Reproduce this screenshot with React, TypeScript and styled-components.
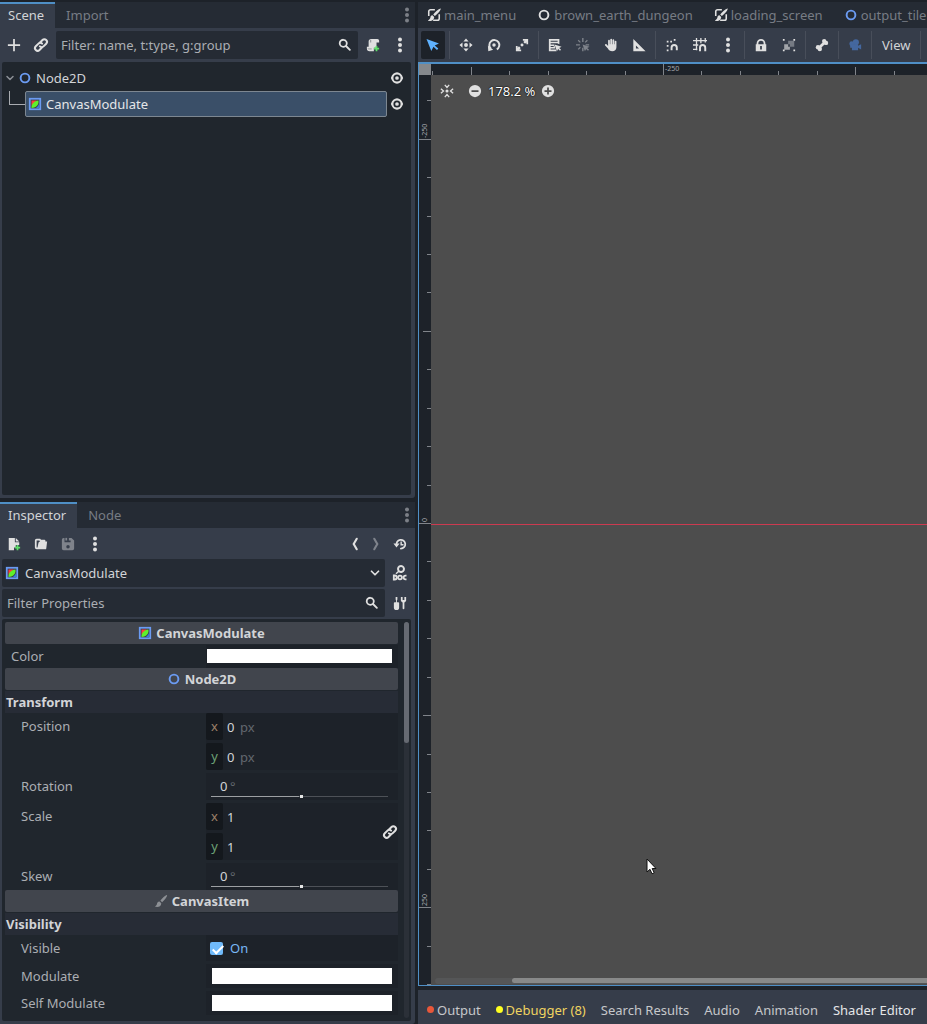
import React from "react";
import styled, { createGlobalStyle, css } from "styled-components";

const c = {
  page: "#1d2229",
  bar: "#252b34",
  base: "#363d4a",
  field: "#252b34",
  tree: "#20262d",
  accent: "#4f8fc6",
  blue: "#70bafa",
  node2d: "#6b9bf2",
  icon: "#e0e0e0",
  text: "#d2d4d7",
  label: "#abaeb3",
  dim: "#777c84",
};

const GlobalStyle = createGlobalStyle`
  * { box-sizing: border-box; }
  body {
    margin: 0;
    background: ${c.page};
    color: ${c.text};
    font: 13px/20px "Noto Sans", sans-serif;
    overflow-x: hidden;
  }
  button, input, select {
    font: inherit;
    color: inherit;
    background: none;
    border: 0;
    padding: 0;
    margin: 0;
    outline: none;
  }
  svg { display: block; flex: none; }
`;

/* ---------- icons ---------- */

const Svg = ({ children, size = 14, color = c.icon }: { children: React.ReactNode; size?: number; color?: string }) => (
  <svg width={size} height={size} viewBox="0 0 16 16" fill={color} aria-hidden="true">
    {children}
  </svg>
);

const AddIcon = () => <Svg><path d="M7 1v6H1v2h6v6h2V9h6V7H9V1z" /></Svg>;

const LinkIcon = () => (
  <Svg size={16}>
    <g fill="none" stroke={c.icon} strokeWidth="2" strokeLinecap="round">
      <path d="M7.300 5.300 9.500 3a2.600 2.600 0 0 1 3.700 3.700L10.500 9.400a2.500 2.500 0 0 1-3.600 0" />
      <path d="M8.700 10.700 6.500 13a2.600 2.600 0 0 1-3.700-3.700L5.500 6.600a2.500 2.500 0 0 1 3.600 0" />
    </g>
  </Svg>
);

const SearchIcon = () => (
  <Svg>
    <path d="M6 1a5 5 0 1 0 2.700 9.200l4.100 4.100a1 1 0 0 0 1.500-1.500l-4.100-4.100A5 5 0 0 0 6 1zm0 2a3 3 0 1 1 0 6 3 3 0 0 1 0-6z" />
  </Svg>
);

const ScriptAddIcon = () => (
  <Svg>
    <path d="M6 1a3 3 0 0 0-3 3v6H1v2a3 3 0 0 0 3 3h5v-4h3V5h3V3a2 2 0 0 0-2-2z" />
    <path d="M6 2a1.500 1.500 0 0 0-1.500 2v1H6z" fill="#9a9da1" />
    <path d="M1.500 11.500h5v2H3z" fill="#b4b6b8" />
    <path d="M11 9h2v2h2v2h-2v2h-2v-2H9v-2h2z" fill="#5fe06a" />
  </Svg>
);

const DotsIcon = ({ color = c.icon }: { color?: string }) => (
  <Svg color={color} size={16}>
    <circle cx="8" cy="2.500" r="2" /><circle cx="8" cy="8" r="2" /><circle cx="8" cy="13.500" r="2" />
  </Svg>
);

const Node2DIcon = ({ color = c.node2d }: { color?: string }) => (
  <Svg><circle cx="8" cy="8" r="5" fill="none" stroke={color} strokeWidth="2.200" /></Svg>
);

const ModulateIcon = () => (
  <Svg>
    <rect x="2" y="2" width="12" height="12" fill="#3a3f4c" stroke="#6b9bf2" strokeWidth="2" />
    <path d="M4 4h6L4 10z" fill="#ff3b3b" />
    <path d="M4 12.500C3.500 8 7 4.500 12 4c.5 4.500-2 8-8 8.500z" fill="#5ff02b" />
    <path d="M12.500 8v4.500H9C10.500 11.500 11.800 10 12.500 8z" fill="#3580e8" />
  </Svg>
);

const EyeIcon = () => (
  <Svg>
    <path
      fillRule="evenodd"
      d="M8 1.500C5 1.500 2.200 4 1 8c1.200 4 4 6.500 7 6.500s5.800-2.500 7-6.500c-1.200-4-4-6.500-7-6.500zm0 2.400a4.100 4.100 0 1 1 0 8.200 4.100 4.100 0 0 1 0-8.200zm0 2a2.100 2.100 0 1 0 0 4.200 2.100 2.100 0 0 0 0-4.200z"
    />
  </Svg>
);

const ChevronIcon = ({ color = c.icon, size = 14 }: { color?: string; size?: number }) => (
  <Svg size={size}><path d="m4 6 4 4 4-4" fill="none" stroke={color} strokeWidth="2" strokeLinecap="round" strokeLinejoin="round" /></Svg>
);

const NewFileIcon = () => (
  <Svg>
    <path d="M2 1v14h6v-3h2V9h4V6H9V1z" /><path d="M10 1v4h4z" />
    <path d="M11 9h2v2h2v2h-2v2h-2v-2H9v-2h2z" fill="#5fe06a" />
  </Svg>
);

const FolderIcon = () => (
  <Svg><path d="M3 2a2 2 0 0 0-2 2v8a2 2 0 0 0 2 2h10a1 1 0 0 0 1-1l1-8H7a2 2 0 0 0-2 2l-1 5H3V4h3l1 1h6V4a1 1 0 0 0-1-1H8L7 2z" /></Svg>
);

const SaveIcon = () => (
  <Svg color="#7f838b">
    <path fillRule="evenodd" d="M3 1a2 2 0 0 0-2 2v10a2 2 0 0 0 2 2h10a2 2 0 0 0 2-2V4l-3-3H9v3h2v2H4V1zm5 8a2 2 0 1 1 0 4 2 2 0 0 1 0-4z" />
    <path d="M5 1h2v3H5z" />
  </Svg>
);

const AngleIcon = ({ flip = false, color = c.icon }: { flip?: boolean; color?: string }) => (
  <Svg>
    <path d={flip ? "m6 2 3.500 6L6 14" : "M10 2 6.500 8l3.500 6"} fill="none" stroke={color} strokeWidth="2.400" strokeLinecap="round" />
  </Svg>
);

const HistoryIcon = () => (
  <Svg>
    <path d="M4.200 9.500A5 5 0 1 1 9 13.200" fill="none" stroke={c.icon} strokeWidth="2" strokeLinecap="round" />
    <path d="M.5 7.500h7L4 12z" /><path d="M8.500 5h1.600v3H12v1.600H8.500z" />
  </Svg>
);

const DocIcon = () => (
  <Svg size={16}>
    <path fillRule="evenodd" d="M9 0a4 4 0 0 0-3.300 6.200L3.500 8.300l1 1 2.200-2A4 4 0 1 0 9 0zm0 2a2 2 0 1 1 0 4 2 2 0 0 1 0-4z" />
    <g fill="none" stroke={c.icon} strokeWidth="1.800">
      <path d="M1.800 10.500v4h1a2 2 0 0 0 0-4z" /><circle cx="8" cy="12.500" r="1.900" /><path d="M14.500 10.600h-1a1.900 1.900 0 0 0 0 3.800h1" />
    </g>
  </Svg>
);

const ToolsIcon = () => (
  <Svg>
    <path d="M3 1h2v3l-.5 1v2H6a1 1 0 0 1 1 1v5a3 3 0 0 1-6 0V8a1 1 0 0 1 1-1h1.500V5L3 4z" />
    <path d="M9 1v4.500a3 3 0 0 0 2 1.800V14a1 1 0 0 0 2 0V7.300a3 3 0 0 0 2-1.800V1h-2v3.500h-2V1z" />
  </Svg>
);

const BrushIcon = () => (
  <Svg color="#8d9095">
    <path d="M14.600 1.200c-2 .6-5 3.500-7.300 6.300l2 2c2.700-2.600 5.300-5.600 5.700-7.700.1-.4-.1-.7-.4-.6z" />
    <path d="M6.300 8.500c-2.300 0-2.800 1.800-3.100 3.500-.2 1-1 1.600-2.200 2.400 3 1 7.300.4 7.300-3.900z" />
  </Svg>
);

const ControlIcon = () => (
  <Svg>
    <path d="M9 2H4a2 2 0 0 0-2 2v5M14 7v5a2 2 0 0 1-2 2H7" fill="none" stroke={c.icon} strokeWidth="1.800" />
    <path d="M15.300.5c-3 1-6.200 4.200-8.200 6.800l1.900 1.900c2.600-2 5.900-5.200 6.700-8 .1-.6 0-.8-.4-.7z" />
    <path d="M6.300 8.300c-1.900 0-2.200 1.500-2.500 2.900-.1.900-.9 1.800-2.800 3.500 3 .8 7.200-.5 7.200-4.500z" />
  </Svg>
);

const SelectIcon = () => <Svg color="#5fb2ff" size={16}><path d="m1.500 2 4.800 12 2.200-4.200L12 13l1.300-1.400-3.600-3 4.300-2z" /></Svg>;

const MoveIcon = () => (
  <Svg><path d="m8 .5 3 3.500H5zM8 15.500 5 12h6zM.5 8 4 5v6zM15.500 8 12 11V5z" /><circle cx="8" cy="8" r="2.200" /></Svg>
);

const RotateIcon = () => (
  <Svg>
    <path d="M4.500 12.200a5.700 5.700 0 1 1 6.700.8" fill="none" stroke={c.icon} strokeWidth="2.200" />
    <path d="M1 8.500 1.500 15 7 13.500z" /><circle cx="8" cy="8" r="2" />
  </Svg>
);

const ScaleIcon = () => (
  <Svg><path d="M9 1h6v6h-2V5l-1.500 1.500-2-2L11 3H9zM1 9h2v2l1.500-1.500 2 2L5 13h2v2H1z" /><circle cx="8" cy="8" r="1.700" /></Svg>
);

const ListSelectIcon = () => (
  <Svg>
    <path fillRule="evenodd" d="M1 1h12v6l-2-.7V6H3v1.500h4L8.500 12H3v1h6l.7 2H1zM3 3v1.300h8V3zm0 6v1.300h3.500V9z" />
    <path d="m7.500 7.500 2.700 7.500 1.400-2.400 2.100 2.100 1.200-1.200-2.100-2.100L15.500 10z" />
  </Svg>
);

const PivotIcon = () => (
  <Svg color="#7f838b">
    <path d="M7 0h1.600v4.500H7zM0 7h4.500v1.600H0zM11 7h4v1.600h-4zM7 11h1.600v4H7zM3 2l2.500 2.500-1 1L2 3zM12.500 2 10 4.500l1 1L13.500 3zM3 13.500 5.500 11l-1-1L2 12.500z" />
    <path d="m7.500 7.500 2.700 7.500 1.400-2.400 2.100 2.100 1.200-1.200-2.100-2.100L15.500 10z" />
  </Svg>
);

const PanIcon = () => (
  <Svg>
    <path d="M7.200 1.800a1 1 0 0 1 2 0V7h.5V2.500a1 1 0 0 1 2 0V7h.5V4a1 1 0 0 1 2 0v6.500C14.200 13.500 12 15 9.500 15 7 15 5.500 14 4.500 12L1.300 8.700a1.100 1.100 0 0 1 1.600-1.500L4.700 9V3a1 1 0 0 1 2 0v4h.5z" />
  </Svg>
);

const RulerIcon = () => <Svg><path fillRule="evenodd" d="M1.500 1v14H15.500zM4.500 8.500l3.500 3.500H4.500z" /></Svg>;

const SnapIcon = () => (
  <Svg>
    <path d="M2 3h2v2H2zM6 3h2v2H6zM10 1h2v2h-2zM2 8h2v2H2zM2 13h2v2H2z" />
    <path d="M7.500 14v-3a3 3 0 0 1 6 0v3" fill="none" stroke={c.icon} strokeWidth="2.200" />
  </Svg>
);

const GridSnapIcon = () => (
  <Svg>
    <path d="M4 0v14M9 0v6M14 0v5M0 3h16M0 8h6M0 13h5" fill="none" stroke={c.icon} strokeWidth="1.500" />
    <path d="M8 15v-4a3 3 0 0 1 6 0v4" fill="none" stroke={c.icon} strokeWidth="2.200" />
  </Svg>
);

const LockIcon = () => (
  <Svg><path fillRule="evenodd" d="M8 1a5 5 0 0 0-5 5v1H2v8h12V7h-1V6a5 5 0 0 0-5-5zm0 2a3 3 0 0 1 3 3v1H5V6a3 3 0 0 1 3-3zM7 9h2v4H7z" /></Svg>
);

const GroupIcon = () => (
  <Svg>
    <path d="M7 3h7v7H9V7H7z" fill="#757a83" />
    <path d="M2.500 7H7v3h2v3.500H2.500z" fill="#a2a5aa" />
    <path d="M1 1h2v2H1zM13 1h2v2h-2zM1 13h2v2H1zM13 13h2v2h-2z" />
  </Svg>
);

const BoneIcon = () => (
  <Svg>
    <path d="m4 9.800 5.800-5.800 2.200 2.200L6.200 12z" />
    <circle cx="10.500" cy="3.500" r="2.500" /><circle cx="12.600" cy="5.600" r="2.500" />
    <circle cx="3.400" cy="10.500" r="2.500" /><circle cx="5.500" cy="12.600" r="2.500" />
  </Svg>
);

const CameraIcon = () => (
  <Svg color="#44679f">
    <circle cx="9" cy="4.800" r="3.500" /><circle cx="4.300" cy="6.500" r="2.800" />
    <path d="M2.500 7h9v1.800L15 7v6l-3.500-1.800V14h-7v-3H2.500z" />
  </Svg>
);

const CenterIcon = () => (
  <Svg>
    <circle cx="8" cy="8" r="1.800" />
    <path d="m5.500 1 2.500 3 2.500-3M5.500 15 8 12l2.500 3M1 5.500 4 8l-3 2.500M15 5.500 12 8l3 2.500" fill="none" stroke={c.icon} strokeWidth="1.500" />
  </Svg>
);

const ZoomIcon = ({ plus = false }: { plus?: boolean }) => (
  <Svg>
    <path fillRule="evenodd" d={plus ? "M8 1a7 7 0 1 0 0 14A7 7 0 0 0 8 1zM7 4h2v3h3v2H9v3H7V9H4V7h3z" : "M8 1a7 7 0 1 0 0 14A7 7 0 0 0 8 1zM4 7h8v2H4z"} />
  </Svg>
);

/* ---------- shell ---------- */

const Editor = styled.div`
  display: grid;
  grid-template-columns: clamp(300px, 45vw, 415px) minmax(0, 1fr);
  column-gap: 3px;
  min-height: 100vh;
  padding-top: 2px;
`;

const Dock = styled.aside`
  display: flex;
  flex-direction: column;
  gap: 4px;
  min-width: 0;
`;

const Panel = styled.section<{ $grow?: boolean }>`
  display: flex;
  flex-direction: column;
  background: ${c.base};
  border-radius: 0 0 3px 0;
  ${(p) => p.$grow && css`flex: 1;`}
`;

const TabBar = styled.div`
  display: flex;
  align-items: stretch;
  height: 26px;
  background: ${c.bar};
  overflow: hidden;
`;

const Tab = styled.button<{ $active?: boolean }>`
  padding: 0 11px;
  color: ${(p) => (p.$active ? c.text : c.dim)};
  ${(p) => p.$active && css`background: ${c.base}; box-shadow: inset 0 2px ${c.accent};`}
  &:first-child { padding-left: 8px; }
`;

const TabMenu = styled.button`
  display: flex;
  align-items: center;
  justify-content: center;
  width: 16px;
  margin-left: auto;
`;

const SceneTab = styled.button`
  display: flex;
  flex: none;
  align-items: center;
  gap: 3px;
  padding: 0 12px 0 9px;
  color: ${c.dim};
  white-space: nowrap;
`;

const Row = styled.div<{ $height: number }>`
  display: flex;
  align-items: center;
  gap: 3px;
  height: ${(p) => p.$height}px;
  padding: 0 3px 0 2px;
`;

const IconButton = styled.button<{ $active?: boolean }>`
  display: flex;
  flex: none;
  align-items: center;
  justify-content: center;
  width: 24px;
  height: 28px;
  border-radius: 2px;
  background: ${(p) => (p.$active ? c.page : "none")};
`;

const Spacer = styled.div`flex: 1;`;

const Field = styled.label<{ $tight?: boolean }>`
  display: flex;
  flex: 1;
  align-items: center;
  min-width: 0;
  height: 28px;
  padding: 0 ${(p) => (p.$tight ? 3 : 6)}px 0 ${(p) => (p.$tight ? 3 : 5)}px;
  background: ${c.field};
  border-radius: 2px;
`;

const TextInput = styled.input`
  flex: 1;
  min-width: 0;
  color: ${c.text};
  &::placeholder { color: ${c.label}; opacity: 1; }
`;

const ObjectSelect = styled.select`
  flex: 1;
  min-width: 0;
  padding-left: 6px;
  appearance: none;
`;

/* ---------- scene tree ---------- */

const Tree = styled.ul`
  flex: 1;
  margin: 0 4px 3px 2px;
  padding: 3px 0 0;
  list-style: none;
  background: ${c.tree};
  border-radius: 2px;
`;

const TreeRow = styled.li`
  display: flex;
  align-items: center;
  height: 26px;
  padding-right: 4px;
`;

const TreeItem = styled.button<{ $selected?: boolean }>`
  display: flex;
  flex: 1;
  align-items: center;
  gap: 4px;
  height: 26px;
  text-align: left;
  ${(p) =>
    p.$selected &&
    css`
      padding-left: 2px;
      background: #3a4f68;
      border: 1px solid #7d8791;
      border-radius: 2px;
      color: #e4e6e8;
    `}
`;

const Fold = styled.button`
  display: flex;
  justify-content: center;
  width: 16px;
`;

const Branch = styled.span`
  align-self: flex-start;
  width: 16px;
  height: 14px;
  margin-left: 7px;
  border: solid #a9acb1;
  border-width: 0 0 1px 1px;
`;

const SlimButton = styled(IconButton)`
  width: 20px;
  height: 26px;
`;

const StepButton = styled(IconButton)`
  width: 18px;
`;

/* ---------- inspector ---------- */

const InspectorBody = styled.div`
  display: flex;
  flex: 1;
  gap: 6px;
  margin: 0 4px 3px 2px;
  padding: 3px 2px 3px 3px;
  background: ${c.tree};
  border-radius: 2px;
`;

const Properties = styled.div`
  flex: 1;
  min-width: 0;
`;

const ScrollTrack = styled.div`
  width: 5px;
  background: #2b3038;
  border-radius: 3px;
`;

const ScrollThumb = styled.div`
  height: 121px;
  background: #666a72;
  border-radius: 3px;
`;

const Category = styled.h2`
  display: flex;
  align-items: center;
  justify-content: center;
  gap: 4px;
  height: 22px;
  margin: 0 0 1px;
  background: #41454d;
  border-radius: 2px;
  font-size: 13px;
  font-weight: 700;
`;

const Section = styled.h3`
  display: flex;
  align-items: center;
  height: 22px;
  margin: 0;
  padding-left: 1px;
  background: #272c36;
  font-size: 13px;
  font-weight: 700;
`;

const Property = styled.div<{ $height?: number; $gap?: number; $indent?: boolean }>`
  display: grid;
  grid-template-columns: minmax(0, 1fr) 192px;
  margin-bottom: ${(p) => p.$gap ?? 3}px;
  > :first-child {
    height: ${(p) => p.$height ?? 27}px;
    line-height: ${(p) => p.$height ?? 27}px;
    padding-left: ${(p) => (p.$indent === false ? 6 : 16)}px;
    color: ${c.label};
  }
`;

const ValueBox = styled.div`
  position: relative;
  background: #1d2229;
`;

const Vector = styled(ValueBox)`
  display: flex;
  flex-direction: column;
  gap: 3px;
`;

const Axis = styled.label<{ $axis: "x" | "y" }>`
  display: flex;
  align-items: center;
  height: 27px;
  &::before {
    content: "${(p) => p.$axis}";
    width: 17px;
    height: 27px;
    margin-right: 4px;
    line-height: 27px;
    text-align: center;
    background: #14181d;
    border-radius: 2px;
    color: ${(p) => (p.$axis === "x" ? "#9c8069" : "#6da277")};
  }
`;

const NumberInput = styled.input`
  width: 10px;
  color: ${c.text};
`;

const Suffix = styled.span`
  padding-left: 3px;
  color: #62676e;
`;

const LinkButton = styled.button`
  position: absolute;
  right: 0;
  top: 21px;
`;

const SliderBox = styled(ValueBox)`
  height: 27px;
  padding-left: 14px;
  line-height: 26px;
  & ${Suffix} { padding-left: 0; }
`;

const Slider = styled.input`
  position: absolute;
  left: 5px;
  right: 10px;
  bottom: 2px;
  width: 177px;
  height: 3px;
  appearance: none;
  background: linear-gradient(90deg, #9da0a3 50%, #4d5157 50%) center / 100% 1px no-repeat;
  &::-webkit-slider-thumb {
    appearance: none;
    width: 3px;
    height: 3px;
    background: #e6e6e6;
  }
`;

const Swatch = styled.button<{ $inset?: boolean }>`
  display: block;
  width: 100%;
  height: 100%;
  padding: ${(p) => (p.$inset ? "4px 6px 4px 6px" : "4px 6px 5px 1px")};
  &::before {
    content: "";
    display: block;
    height: 100%;
    background: #fff;
  }
`;

const CheckLabel = styled.label`
  display: flex;
  align-items: center;
  gap: 7px;
  height: 100%;
  padding-left: 4px;
  color: #78b8f5;
`;

const CheckBox = styled.input`
  position: relative;
  width: 13px;
  height: 13px;
  appearance: none;
  background: ${c.blue};
  border-radius: 2px;
  &:checked::after {
    content: "";
    position: absolute;
    left: 5px;
    top: 1px;
    width: 4px;
    height: 9px;
    border: solid #fff;
    border-width: 0 2px 2px 0;
    transform: rotate(45deg);
  }
`;

/* ---------- viewport ---------- */

const Workspace = styled.main`
  display: flex;
  flex-direction: column;
  min-width: 0;
`;

const Toolbar = styled.div`
  display: flex;
  align-items: center;
  gap: 4px;
  height: 34px;
  padding: 0 3px;
  background: ${c.base};
  overflow: hidden;
`;

const Separator = styled.span`
  flex: none;
  width: 1px;
  height: 28px;
  background: #484e5a;
`;

const ViewButton = styled.button`
  flex: none;
  padding: 0 6px;
`;

const Viewport = styled.div`
  display: grid;
  grid-template: 11px minmax(0, 1fr) / 12px minmax(0, 1fr);
  flex: 1;
  background: ${c.page};
  border: solid ${c.accent};
  border-width: 2px 0 1px 1px;
`;

const Corner = styled.div`background: #85888c;`;

const RulerBox = styled.div`
  position: relative;
  overflow: hidden;
  svg { position: absolute; inset: 0; }
`;

const Canvas = styled.div`
  position: relative;
  background: #4d4d4d;
  overflow: hidden;
`;

const OriginLine = styled.div`
  position: absolute;
  left: 0;
  right: 0;
  top: 449px;
  height: 1px;
  background: #cc3a50;
`;

const ZoomControls = styled.div`
  position: absolute;
  left: 9px;
  top: 6px;
  display: flex;
  align-items: center;
  gap: 6px;
  text-shadow: 0 0 2px #000, 0 0 1px #000;
  color: #fff;
  button:first-child { margin-right: 8px; }
`;

const CanvasScroll = styled.div`
  position: absolute;
  left: 4px;
  right: 0;
  bottom: 1px;
  height: 6px;
  padding-left: 77px;
  background: #555657;
  border-radius: 3px 0 0 3px;
  &::before {
    content: "";
    display: block;
    height: 5px;
    background: #888989;
    border-radius: 3px 0 0 3px;
  }
`;

const Pointer = styled.svg`
  position: absolute;
  left: 215px;
  top: 783px;
`;

const BottomBar = styled.nav`
  display: flex;
  align-items: center;
  gap: 1px;
  height: 34px;
  margin-top: 4px;
  padding: 5px 2px 0;
  background: ${c.base};
  overflow: hidden;
`;

const BottomButton = styled.button<{ $dot?: string; $color?: string }>`
  display: flex;
  flex: none;
  align-items: center;
  gap: 3px;
  padding: 0 7px;
  color: ${(p) => p.$color ?? "#c6c8cb"};
  ${(p) =>
    p.$dot &&
    css`
      &::before {
        content: "";
        width: 7px;
        height: 7px;
        border-radius: 4px;
        background: ${p.$dot};
      }
    `}
`;

const STEP = 38.43;

/* Ticks every STEP pixels; each tenth one carries a label, each fifth one is longer. */
const Ruler = ({ vertical = false, origin, first, count }: { vertical?: boolean; origin: number; first: number; count: number }) => (
  <RulerBox>
    <svg width="100%" height="100%" aria-hidden="true">
      {Array.from({ length: count }, (_, i) => {
        const n = first + i;
        const p = Math.round(origin + n * STEP);
        const size = n % 10 === 0 ? 12 : n % 5 === 0 ? 8 : 4;
        const label = n % 10 === 0 ? String(n * 25 - (vertical ? 0 : 250)) : null;
        return (
          <g key={n}>
            {vertical
              ? <rect x={12 - size} y={p} width={size} height={1} fill="#80848a" />
              : <rect x={p} y={11 - size} width={1} height={size} fill="#80848a" />}
            {label && (
              <text
                fill="#a4a7ab"
                fontSize="7"
                transform={vertical ? `translate(8 ${p - 1}) rotate(-90)` : `translate(${p + 2} 7)`}
              >
                {label}
              </text>
            )}
          </g>
        );
      })}
    </svg>
  </RulerBox>
);

type Tool = { name: string; icon: React.ReactNode; active?: boolean };

const toolGroups: Tool[][] = [
  [{ name: "Select", icon: <SelectIcon />, active: true }],
  [{ name: "Move", icon: <MoveIcon /> }, { name: "Rotate", icon: <RotateIcon /> }, { name: "Scale", icon: <ScaleIcon /> }],
  [
    { name: "List select", icon: <ListSelectIcon /> },
    { name: "Pivot", icon: <PivotIcon /> },
    { name: "Pan", icon: <PanIcon /> },
    { name: "Ruler", icon: <RulerIcon /> },
  ],
  [{ name: "Smart snap", icon: <SnapIcon /> }, { name: "Grid snap", icon: <GridSnapIcon /> }, { name: "Snap options", icon: <DotsIcon /> }],
  [{ name: "Lock", icon: <LockIcon /> }, { name: "Group", icon: <GroupIcon /> }],
  [{ name: "Skeleton", icon: <BoneIcon /> }],
  [{ name: "Camera override", icon: <CameraIcon /> }],
];

const VectorProperty = ({ name, value, unit, linked }: { name: string; value: string; unit?: string; linked?: boolean }) => (
  <Property>
    <span>{name}</span>
    <Vector>
      {(["x", "y"] as const).map((axis) => (
        <Axis key={axis} $axis={axis}>
          <NumberInput aria-label={`${name} ${axis}`} defaultValue={value} />
          {unit && <Suffix>{unit}</Suffix>}
        </Axis>
      ))}
      {linked && <LinkButton aria-label="Link axes"><LinkIcon /></LinkButton>}
    </Vector>
  </Property>
);

const AngleProperty = ({ name, last }: { name: string; last?: boolean }) => (
  <Property $gap={last ? 0 : 3}>
    <span>{name}</span>
    <SliderBox>
      <NumberInput aria-label={name} defaultValue="0" />
      <Suffix>°</Suffix>
      <Slider type="range" aria-label={`${name} slider`} min={-180} max={180} defaultValue={4} />
    </SliderBox>
  </Property>
);

const ColorProperty = ({ name, top }: { name: string; top?: boolean }) => (
  <Property $height={top ? 23 : 24} $gap={top ? 0 : 3} $indent={!top}>
    <span>{name}</span>
    <ValueBox><Swatch $inset={!top} aria-label={name} /></ValueBox>
  </Property>
);

export default function App() {
  return (
    <>
      <GlobalStyle />
      <Editor>
        <Dock>
          <Panel $grow>
            <TabBar role="tablist">
              <Tab role="tab" $active>Scene</Tab>
              <Tab role="tab">Import</Tab>
              <TabMenu aria-label="Dock menu"><DotsIcon color="#7c8087" /></TabMenu>
            </TabBar>
            <Row $height={34}>
              <IconButton aria-label="Add node"><AddIcon /></IconButton>
              <IconButton aria-label="Instantiate scene"><LinkIcon /></IconButton>
              <Field>
                <TextInput aria-label="Filter nodes" placeholder="Filter: name, t:type, g:group" />
                <SearchIcon />
              </Field>
              <IconButton aria-label="Attach script"><ScriptAddIcon /></IconButton>
              <IconButton aria-label="Scene options"><DotsIcon /></IconButton>
            </Row>
            <Tree role="tree">
              <TreeRow role="treeitem">
                <Fold aria-label="Collapse"><ChevronIcon color="#8b8f96" size={12} /></Fold>
                <TreeItem><Node2DIcon />Node2D</TreeItem>
                <SlimButton aria-label="Toggle Node2D"><EyeIcon /></SlimButton>
              </TreeRow>
              <TreeRow role="treeitem">
                <Branch />
                <TreeItem $selected><ModulateIcon />CanvasModulate</TreeItem>
                <SlimButton aria-label="Toggle CanvasModulate"><EyeIcon /></SlimButton>
              </TreeRow>
            </Tree>
          </Panel>

          <Panel>
            <TabBar role="tablist">
              <Tab role="tab" $active>Inspector</Tab>
              <Tab role="tab">Node</Tab>
              <TabMenu aria-label="Dock menu"><DotsIcon color="#7c8087" /></TabMenu>
            </TabBar>
            <Row $height={31}>
              <IconButton aria-label="New resource"><NewFileIcon /></IconButton>
              <IconButton aria-label="Open resource"><FolderIcon /></IconButton>
              <IconButton aria-label="Save resource"><SaveIcon /></IconButton>
              <IconButton aria-label="Resource options"><DotsIcon /></IconButton>
              <Spacer />
              <StepButton aria-label="Back"><AngleIcon /></StepButton>
              <StepButton aria-label="Forward"><AngleIcon flip color="#7f838b" /></StepButton>
              <IconButton aria-label="History"><HistoryIcon /></IconButton>
            </Row>
            <Row $height={28}>
              <Field $tight>
                <ModulateIcon />
                <ObjectSelect aria-label="Edited object" defaultValue="CanvasModulate">
                  <option>CanvasModulate</option>
                </ObjectSelect>
                <ChevronIcon />
              </Field>
              <IconButton aria-label="Open documentation"><DocIcon /></IconButton>
            </Row>
            <Row $height={32}>
              <Field>
                <TextInput aria-label="Filter properties" placeholder="Filter Properties" />
                <SearchIcon />
              </Field>
              <IconButton aria-label="Manage properties"><ToolsIcon /></IconButton>
            </Row>
            <InspectorBody>
              <Properties>
                <Category><ModulateIcon />CanvasModulate</Category>
                <ColorProperty name="Color" top />
                <Category><Node2DIcon />Node2D</Category>
                <Section>Transform</Section>
                <VectorProperty name="Position" value="0" unit="px" />
                <AngleProperty name="Rotation" />
                <VectorProperty name="Scale" value="1" linked />
                <AngleProperty name="Skew" last />
                <Category><BrushIcon />CanvasItem</Category>
                <Section>Visibility</Section>
                <Property $height={26}>
                  <span>Visible</span>
                  <ValueBox>
                    <CheckLabel><CheckBox type="checkbox" defaultChecked />On</CheckLabel>
                  </ValueBox>
                </Property>
                <ColorProperty name="Modulate" />
                <ColorProperty name="Self Modulate" />
              </Properties>
              <ScrollTrack><ScrollThumb /></ScrollTrack>
            </InspectorBody>
          </Panel>
        </Dock>

        <Workspace>
          <TabBar role="tablist">
            <SceneTab role="tab"><ControlIcon />main_menu</SceneTab>
            <SceneTab role="tab"><Node2DIcon color={c.icon} />brown_earth_dungeon</SceneTab>
            <SceneTab role="tab"><ControlIcon />loading_screen</SceneTab>
            <SceneTab role="tab"><Node2DIcon />output_tilemap</SceneTab>
          </TabBar>
          <Toolbar>
            {toolGroups.map((group) => (
              <React.Fragment key={group[0].name}>
                {group.map((tool) => (
                  <IconButton key={tool.name} aria-label={tool.name} $active={tool.active}>{tool.icon}</IconButton>
                ))}
                <Separator />
              </React.Fragment>
            ))}
            <ViewButton>View</ViewButton>
            <Separator />
          </Toolbar>
          <Viewport>
            <Corner />
            <Ruler origin={232} first={-6} count={20} />
            <Ruler vertical origin={448} first={-11} count={26} />
            <Canvas>
              <OriginLine />
              <ZoomControls>
                <button aria-label="Center view"><CenterIcon /></button>
                <button aria-label="Zoom out"><ZoomIcon /></button>
                <span>178.2 %</span>
                <button aria-label="Zoom in"><ZoomIcon plus /></button>
              </ZoomControls>
              <CanvasScroll />
              <Pointer width="11" height="17" viewBox="0 0 11 17" aria-hidden="true">
                <path d="M1 1v13l3-2.700 2 4.500 2.200-1-2-4.300H10z" fill="#fff" stroke="#111" />
              </Pointer>
            </Canvas>
          </Viewport>
          <BottomBar>
            <BottomButton $dot="#e8573a">Output</BottomButton>
            <BottomButton $dot="#ffff20" $color="#f0d460">Debugger (8)</BottomButton>
            <BottomButton>Search Results</BottomButton>
            <BottomButton>Audio</BottomButton>
            <BottomButton>Animation</BottomButton>
            <BottomButton $color="#e4e6e8">Shader Editor</BottomButton>
          </BottomBar>
        </Workspace>
      </Editor>
    </>
  );
}
